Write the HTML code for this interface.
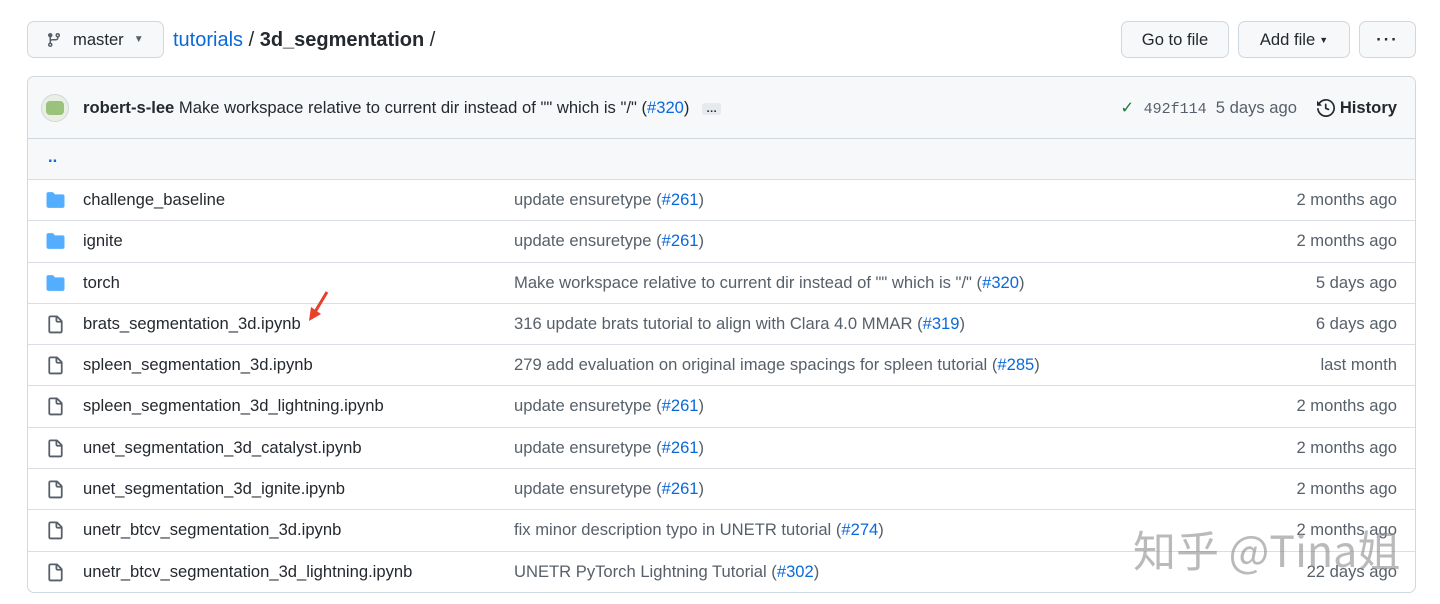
<!DOCTYPE html>
<html><head><meta charset="utf-8"><style>
*{box-sizing:border-box;margin:0;padding:0}
body{width:1440px;height:604px;background:#fff;font-family:"Liberation Sans",Arial,sans-serif;color:#24292f;font-size:16.6px;position:relative;overflow:hidden}
.btn{position:absolute;border:1px solid #d0d7de;border-radius:7px;background:#f6f8fa;height:37px;top:21px;display:flex;align-items:center;justify-content:center;font-size:16.6px;color:#24292f}
.crumb{position:absolute;left:173px;top:29px;font-size:20px}
.crumb a{color:#0969da;text-decoration:none}
.box{position:absolute;left:27px;top:76px;width:1389px;height:517px;border:1px solid #d0d7de;border-radius:7px;overflow:hidden}
.hdr{height:62px;background:#f6f8fa;border-bottom:1px solid #d0d7de;position:relative}
.up{height:41px;background:#f6f8fa;border-bottom:1px solid #d8dee4;position:relative}
.row{height:41.3px;border-bottom:1px solid #d8dee4;position:relative}
.row:last-child{border-bottom:none}
.row span{position:absolute;top:10px;white-space:nowrap}
.n{left:55px}.m{left:486px;color:#57606a}.d{right:18px;color:#57606a}
.m a{color:#0969da}
.ic{position:absolute;left:17px;top:11px}
</style></head><body>
<div class="btn" style="left:27px;width:137px;justify-content:flex-start;padding-left:18px">
<svg width="16" height="16" viewBox="0 0 16 16" fill="#57606a"><path d="M11.75 2.5a.75.75 0 100 1.5.75.75 0 000-1.5zm-2.25.75a2.25 2.25 0 113 2.122V6A2.5 2.5 0 0110 8.5H6a1 1 0 00-1 1v1.128a2.251 2.251 0 11-1.5 0V5.372a2.25 2.25 0 111.5 0v1.836A2.492 2.492 0 016 7h4a1 1 0 001-1v-.628A2.25 2.25 0 019.5 3.25zM4.25 12a.75.75 0 100 1.5.75.75 0 000-1.5zM3.5 3.25a.75.75 0 111.5 0 .75.75 0 01-1.5 0z"/></svg>
<span style="margin-left:11px">master</span><span style="margin-left:10px;font-size:10px;color:#57606a">▼</span></div>
<div class="crumb"><a>tutorials</a> / <b style="font-weight:600">3d_segmentation</b> /</div>
<div class="btn" style="left:1121px;width:108px">Go to file</div>
<div class="btn" style="left:1238px;width:112px">Add file <span style="font-size:9px;margin-left:4px">▼</span></div>
<div class="btn" style="left:1359px;width:57px;font-weight:bold;letter-spacing:2px">···</div>
<div class="box">
<div class="hdr">
<div style="position:absolute;left:13px;top:17px;width:28px;height:28px;border-radius:50%;background:#e9f0e3;border:1px solid #d0d7de;overflow:hidden"><div style="position:absolute;left:4px;top:6px;width:18px;height:14px;background:#9ac27a;border-radius:4px"></div></div>
<div style="position:absolute;left:55px;top:21px;white-space:nowrap"><b>robert-s-lee</b> Make workspace relative to current dir instead of "" which is "/" (<span style="color:#0969da">#320</span>) <span style="display:inline-block;background:#e6eaef;border-radius:3px;font-size:11px;padding:0 4px;margin-left:8px;vertical-align:middle;font-weight:bold">…</span></div>
<div style="position:absolute;right:118px;top:21px;color:#57606a;white-space:nowrap"><span style="color:#1a7f37">✓</span>&nbsp; <span style="font-family:'Liberation Mono',monospace;font-size:15px">492f114</span>&nbsp; 5 days ago</div>
<div style="position:absolute;right:18px;top:21px;font-weight:bold;display:flex;align-items:center"><svg width="18" height="18" viewBox="0 0 16 16" fill="#24292f" style="margin-right:5px"><path d="M1.643 3.143L.427 1.927A.25.25 0 000 2.104V5.75c0 .138.112.25.25.25h3.646a.25.25 0 00.177-.427L2.715 4.215a6.5 6.5 0 11-1.18 4.458.75.75 0 10-1.493.154 8.001 8.001 0 101.6-5.684zM7.75 4a.75.75 0 01.75.75v2.992l2.028.812a.75.75 0 01-.557 1.392l-2.5-1A.75.75 0 017 8.25v-3.5A.75.75 0 017.75 4z"/></svg>History</div>
</div>
<div class="up"><span style="position:absolute;left:20px;top:8px;color:#0969da;font-weight:bold">..</span></div>
<div id="rows"></div>
</div>
<svg style="position:absolute;left:305px;top:290px" width="26" height="34" viewBox="0 0 26 34"><path d="M22 2 L10 22" stroke="#e8402a" stroke-width="3"/><path d="M4 31 L6 17 L16 24 Z" fill="#e8402a"/></svg>
<div style="position:absolute;left:1133px;top:518px;font-size:43px;color:rgba(140,140,140,.6);font-family:'Noto Sans CJK SC',sans-serif;white-space:nowrap;letter-spacing:0px">知乎 @Tina姐</div>
<script>
const F='<svg class="ic" width="21" height="18" viewBox="0 0 16 16" fill="#54aeff"><path d="M1.75 1A1.75 1.75 0 000 2.75v10.5C0 14.216.784 15 1.75 15h12.5A1.75 1.75 0 0016 13.25v-8.5A1.75 1.75 0 0014.25 3H7.5a.25.25 0 01-.2-.1l-.9-1.2C6.07 1.26 5.55 1 5 1H1.75z"/></svg>';
const D='<svg class="ic" style="left:18px" width="19" height="20" viewBox="0 0 16 16" fill="#57606a"><path d="M3.75 1.5a.25.25 0 00-.25.25v11.5c0 .138.112.25.25.25h8.5a.25.25 0 00.25-.25V6H9.75A1.75 1.75 0 018 4.25V1.5H3.75zm5.75.56v2.19c0 .138.112.25.25.25h2.19L9.5 2.06zM2 1.75C2 .784 2.784 0 3.75 0h5.086c.464 0 .909.184 1.237.513l3.414 3.414c.329.328.513.773.513 1.237v8.086A1.75 1.75 0 0112.25 15h-8.5A1.75 1.75 0 012 13.25V1.75z"/></svg>';
const u='update ensuretype (<a>#261</a>)';
const R=[[F,'challenge_baseline',u,'2 months ago'],[F,'ignite',u,'2 months ago'],[F,'torch','Make workspace relative to current dir instead of "" which is "/" (<a>#320</a>)','5 days ago'],[D,'brats_segmentation_3d.ipynb','316 update brats tutorial to align with Clara 4.0 MMAR (<a>#319</a>)','6 days ago'],[D,'spleen_segmentation_3d.ipynb','279 add evaluation on original image spacings for spleen tutorial (<a>#285</a>)','last month'],[D,'spleen_segmentation_3d_lightning.ipynb',u,'2 months ago'],[D,'unet_segmentation_3d_catalyst.ipynb',u,'2 months ago'],[D,'unet_segmentation_3d_ignite.ipynb',u,'2 months ago'],[D,'unetr_btcv_segmentation_3d.ipynb','fix minor description typo in UNETR tutorial (<a>#274</a>)','2 months ago'],[D,'unetr_btcv_segmentation_3d_lightning.ipynb','UNETR PyTorch Lightning Tutorial (<a>#302</a>)','22 days ago']];
document.getElementById('rows').innerHTML=R.map(r=>`<div class="row">${r[0]}<span class="n">${r[1]}</span><span class="m">${r[2]}</span><span class="d">${r[3]}</span></div>`).join('');
</script>
</body></html>
